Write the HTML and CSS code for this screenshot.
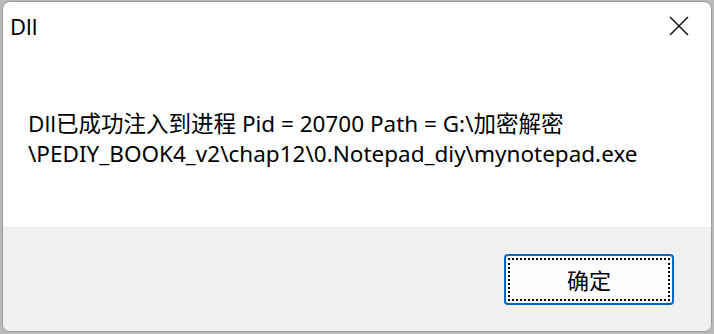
FILE: index.html
```html
<!DOCTYPE html>
<html lang="zh-CN">
<head>
    <meta charset="UTF-8">
    <title>Dll</title>
    <link rel="stylesheet" href="styles.css">
</head>
<body>
    <div class="window">
        <div class="titlebar">
            <span class="title">Dll</span>
            <span class="close">
                <svg width="20" height="20" viewBox="0 0 20 20">
                    <path d="M1 1 L19 19 M19 1 L1 19" stroke="#1b1b1b" stroke-width="1.6" fill="none"/>
                </svg>
            </span>
        </div>

        <div class="content">
            <p class="message">Dll已成功注入到进程 Pid = 20700 Path = G:\加密解密<br>\PEDIY_BOOK4_v2\chap12\0.Notepad_diy\mynotepad.exe</p>
        </div>

        <div class="footer">
            <button class="ok-button"><span class="focus-rect">确定</span></button>
        </div>
    </div>
</body>
</html>
```

FILE: styles.css
```css
html, body {
    margin: 0;
    height: 100%;
}

body {
    font-family: "Noto Sans", "Noto Sans CJK SC", sans-serif;
    background: #b9b9b9;
    padding: 1px 2px 2px 2px;
    box-sizing: border-box;
}

.window {
    height: 100%;
    display: flex;
    flex-direction: column;
    background: white;
    border: 1px solid #9a9a9a;
    border-radius: 8px;
    overflow: hidden;
    box-sizing: border-box;
}

.titlebar {
    height: 50px;
    display: flex;
    align-items: center;
    justify-content: space-between;
    padding: 0 22px 0 7px;
}

.title {
    font-size: 22px;
    color: black;
    margin-top: -3px;
}

.close {
    display: flex;
    margin-top: -3px;
}

.content {
    flex: 1;
    padding: 57px 0 0 25px;
}

.message {
    margin: 0;
    font-size: 22.5px;
    line-height: 30px;
    color: black;
}

.footer {
    height: 104px;
    background: #f0f0f0;
    display: flex;
    align-items: center;
    justify-content: flex-end;
    padding-right: 37px;
}

.ok-button {
    width: 170px;
    height: 51px;
    background: #fdfdfd;
    border: 2px solid #0067c0;
    border-radius: 4px;
    padding: 2px;
    font-family: "Noto Sans CJK SC", sans-serif;
    font-size: 22px;
    color: black;
    display: flex;
}

.focus-rect {
    flex: 1;
    display: flex;
    align-items: center;
    justify-content: center;
    border: 2px dotted #000;
}
```
